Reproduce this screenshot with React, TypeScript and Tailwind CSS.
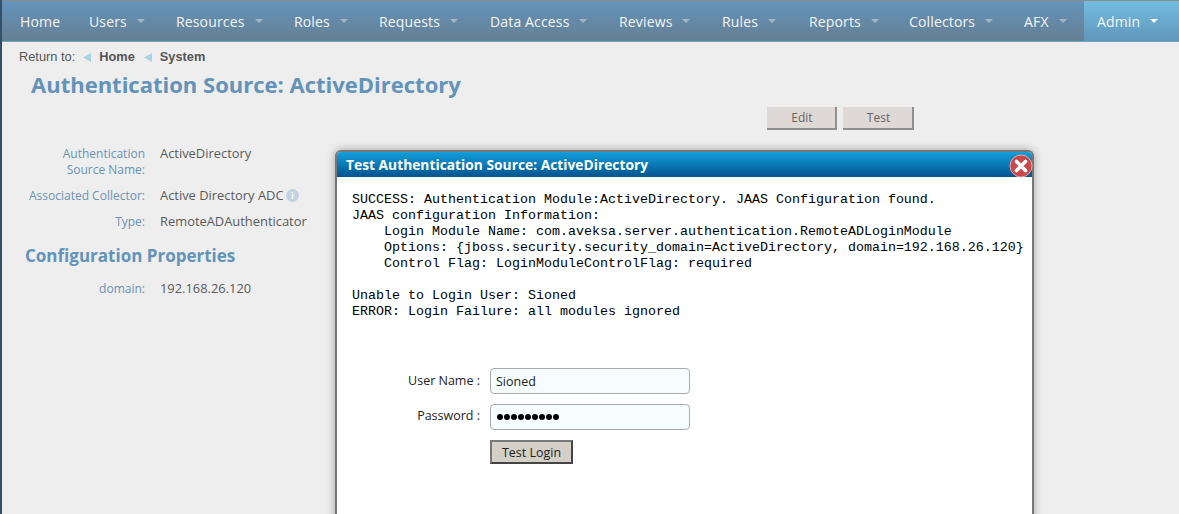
const font = { fontFamily: '"Open Sans", sans-serif' }

const navItems = [
  { label: 'Home', caret: false, w: 'w-[69px]' },
  { label: 'Users', caret: true, w: 'w-[87px]' },
  { label: 'Resources', caret: true, w: 'w-[118px]' },
  { label: 'Roles', caret: true, w: 'w-[85px]' },
  { label: 'Requests', caret: true, w: 'w-[111px]' },
  { label: 'Data Access', caret: true, w: 'w-[129px]' },
  { label: 'Reviews', caret: true, w: 'w-[103px]' },
  { label: 'Rules', caret: true, w: 'w-[87px]' },
  { label: 'Reports', caret: true, w: 'w-[100px]' },
  { label: 'Collectors', caret: true, w: 'w-[115px]' },
  { label: 'AFX', caret: true, w: 'w-[73px]' },
]

function Caret({ color }: { color: string }) {
  return (
    <svg width="8" height="4" viewBox="0 0 8 4" className="ml-[10px] shrink-0">
      <path d="M0 0h8L4 4z" fill={color} />
    </svg>
  )
}

function BackArrow() {
  return (
    <svg width="9" height="9" viewBox="0 0 9 9" className="mr-[7px]">
      <path d="M0 4.5L8 0v9z" fill="#a9d3e0" />
    </svg>
  )
}

function Row({ label, children, className }: { label: React.ReactNode; children: React.ReactNode; className?: string }) {
  return (
    <div className={`flex leading-[16px] ${className ?? ''}`}>
      <div className="w-[143px] shrink-0 text-right text-[12px] text-[#6a93b5]">{label}</div>
      <div className="ml-[15px] -mt-[1px] text-[12.9px] text-[#5a5a5a] whitespace-nowrap flex items-center self-start">{children}</div>
    </div>
  )
}

const output = `SUCCESS: Authentication Module:ActiveDirectory. JAAS Configuration found.
JAAS configuration Information:
    Login Module Name: com.aveksa.server.authentication.RemoteADLoginModule
    Options: {jboss.security.security_domain=ActiveDirectory, domain=192.168.26.120}
    Control Flag: LoginModuleControlFlag: required

Unable to Login User: Sioned
ERROR: Login Failure: all modules ignored`

export default function App() {
  return (
    <div className="relative w-[1179px] h-[514px] overflow-hidden bg-[#eeeeee] border-l-2 border-l-[#33506b]" style={font}>
      {/* Nav bar */}
      <div className="-ml-[2px] flex h-[42px] border-t border-t-[#8a8a8a] border-b border-b-[#6fa5bd] bg-gradient-to-b from-[#6494bb] to-[#657f93] text-[14px] tracking-[0.15px] text-[#f4f6f8]">
        <div className="w-[7px]" />
        {navItems.map(item => (
          <div key={item.label} className={`flex items-center pl-[13px] ${item.w}`}>
            <span>{item.label}</span>
            {item.caret && <Caret color="#a3b6c6" />}
          </div>
        ))}
        <div className="flex flex-1 items-center pl-[13px] bg-gradient-to-b from-[#74bde0] to-[#6096bb]">
          <span>Admin</span>
          <Caret color="#ffffff" />
        </div>
      </div>

      {/* Breadcrumb */}
      <div className="flex items-center mt-[6px] ml-[17px] h-[18px] text-[12.8px] text-[#555555]" style={{ fontFamily: '"Liberation Sans", sans-serif' }}>
        <span className="mr-[8px]">Return to:</span>
        <BackArrow />
        <span className="font-bold mr-[9px]">Home</span>
        <BackArrow />
        <span className="font-bold">System</span>
      </div>

      <h1 className="ml-[29px] mt-[3px] text-[22px] leading-[30px] font-bold text-[#6393b9]">Authentication Source: ActiveDirectory</h1>

      {/* Action buttons */}
      <div className="flex mt-[8px] ml-[765px] gap-[6px]">
        <div className="w-[70px] h-[23px] flex items-center justify-center pl-[2px] bg-[#ded8d6] border-r-2 border-b-2 border-[#8f8f8f] text-[12px] text-[#666666]">Edit</div>
        <div className="w-[71px] h-[23px] flex items-center justify-center pl-[2px] bg-[#ded8d6] border-r-2 border-b-2 border-[#8f8f8f] text-[12px] text-[#666666]">Test</div>
      </div>

      {/* Properties */}
      <div className="mt-[16px]">
        <Row label={<>Authentication<br />Source Name:</>}>ActiveDirectory</Row>
        <Row label="Associated Collector:" className="mt-[10px]">
          Active Directory ADC
          <svg width="13" height="13" viewBox="0 0 13 13" className="ml-[2px]">
            <circle cx="6.5" cy="6.5" r="6.5" fill="#c3d2e3" />
            <rect x="5.7" y="5.5" width="1.6" height="4.5" fill="#fff" />
            <rect x="5.7" y="3" width="1.6" height="1.6" fill="#fff" />
          </svg>
        </Row>
        <Row label="Type:" className="mt-[10px]">RemoteADAuthenticator</Row>
        <h2 className="ml-[23px] mt-[13px] text-[17px] leading-[26px] font-bold text-[#6393b9]">Configuration Properties</h2>
        <Row label="domain:" className="mt-[12px]">192.168.26.120</Row>
      </div>

      {/* Modal */}
      <div className="absolute left-[333px] top-[150px] w-[699px] h-[400px] bg-white border-2 border-[#777777] border-b-0 rounded-tl-[6px] rounded-tr-[6px] shadow-[0_0_8px_rgba(0,0,0,0.35)]">
        <div className="h-[25px] flex items-center pl-[9px] pt-[1px] rounded-t-[4px] bg-gradient-to-b from-[#149fdb] to-[#04548f] text-white font-bold text-[13.8px]">
          Test Authentication Source: ActiveDirectory
        </div>
        <pre className="ml-[15px] mt-[15px] text-[13.33px] leading-[16px] text-black" style={{ fontFamily: '"Liberation Mono", monospace' }}>{output}</pre>

        <div className="mt-[48px] text-[12.5px] text-[#222222]">
          <div className="flex items-center">
            <div className="w-[143px] text-right">User Name :</div>
            <div className="ml-[10px] w-[200px] h-[26px] flex items-center pl-[5px] pt-[2px] bg-[#f5fdff] border border-[#aaaaaa] rounded-[4px] text-[12.5px]">Sioned</div>
          </div>
          <div className="flex items-center mt-[10px]">
            <div className="w-[143px] -mt-[2px] text-right">Password :</div>
            <div className="ml-[10px] w-[200px] h-[26px] flex items-center pl-[6px] bg-[#f5fdff] border border-[#aaaaaa] rounded-[4px]">
              <span className="flex gap-[1px]">
                {Array.from({ length: 9 }).map((_, i) => (
                  <span key={i} className="w-[6px] h-[6px] rounded-full bg-black" />
                ))}
              </span>
            </div>
          </div>
          <div className="ml-[153px] mt-[10px] w-[83px] h-[24px] flex items-center justify-center pt-[2px] bg-[#d4d0c8] border-2 border-t-[#777777] border-l-[#777777] border-r-[#444444] border-b-[#444444] text-[12.5px]">Test Login</div>
        </div>

        {/* Close */}
        <svg width="24" height="24" viewBox="0 0 24 24" className="absolute right-[-1px] top-[2px]">
          <circle cx="12" cy="12" r="11" fill="#c9474b" stroke="#e9a9a9" strokeWidth="1" />
          <path d="M7.5 7.5l9 9M16.5 7.5l-9 9" stroke="#ffffff" strokeWidth="3.6" strokeLinecap="round" />
        </svg>
      </div>
    </div>
  )
}
